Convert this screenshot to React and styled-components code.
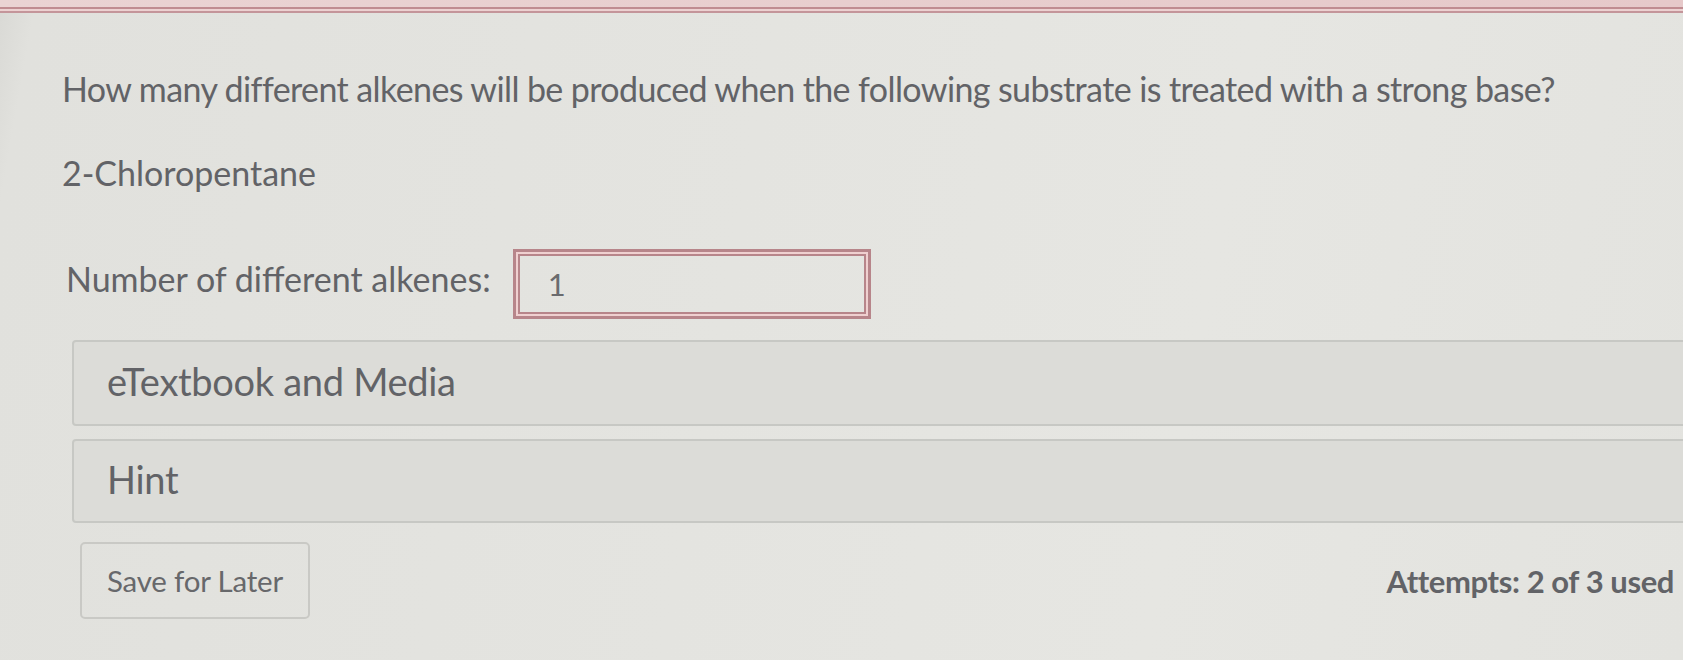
import React from 'react';
import styled, { createGlobalStyle } from 'styled-components';

const GlobalStyle = createGlobalStyle`
  html, body {
    margin: 0;
    padding: 0;
    overflow: hidden;
  }

  body {
    font-family: Lato, "Open Sans", sans-serif;
    background: #e2e2de;
  }
`;

const App = () => {
  return (
    <>
      <GlobalStyle />
      <Page>
        <TopBand />
        <Content>
          <Question>
            How many different alkenes will be produced when the following substrate is treated with a strong base?
          </Question>
          <Substrate>2-Chloropentane</Substrate>

          <AnswerRow>
            <Label>Number of different alkenes:</Label>
            <AnswerBox>
              <AnswerValue>1</AnswerValue>
            </AnswerBox>
          </AnswerRow>

          <Panel $top={21} $height={86}>
            <PanelTitle>eTextbook and Media</PanelTitle>
          </Panel>
          <Panel $top={13} $height={84}>
            <PanelTitle>Hint</PanelTitle>
          </Panel>

          <Footer>
            <SaveButton>Save for Later</SaveButton>
            <Attempts>Attempts: 2 of 3 used</Attempts>
          </Footer>
        </Content>
      </Page>
    </>
  );
};

const Page = styled.div`
  width: 1683px;
  height: 660px;
  background: linear-gradient(100deg, #d9d9d5 0%, #e1e1dd 2%, #e3e3df 30%, #e6e6e2 70%, #e3e3df 100%);
  overflow: hidden;
`;

const TopBand = styled.div`
  height: 7px;
  background: linear-gradient(90deg, #ead3d3, #e6c9ca);
  border-bottom: 2px solid #c08c91;
  box-shadow: 0 2px 0 #ecd1d1, 0 4px 0 #c4959a;
`;

const Content = styled.div`
  display: flex;
  flex-direction: column;
  padding: 62px 0 0 62px;
`;

const Question = styled.div`
  font-size: 34px;
  line-height: 36px;
  letter-spacing: -0.6px;
  color: #626367;
  white-space: nowrap;
`;

const Substrate = styled.div`
  margin-top: 48px;
  font-size: 34px;
  line-height: 36px;
  color: #626367;
`;

const AnswerRow = styled.div`
  display: flex;
  align-items: center;
  gap: 22px;
  margin-top: 58px;
  padding-left: 4px;
`;

const Label = styled.div`
  font-size: 34px;
  line-height: 36px;
  color: #626367;
  padding-bottom: 11px;
`;

const AnswerBox = styled.div`
  display: flex;
  align-items: center;
  width: 358px;
  height: 70px;
  padding-left: 32px;
  box-sizing: border-box;
  border: 3px solid #b7858a;
  box-shadow: inset 0 0 0 2px #efd0d0, inset 0 0 0 4px #b7858a;
`;

const AnswerValue = styled.span`
  font-size: 31px;
  color: #6a6b6e;
`;

const Panel = styled.div`
  display: flex;
  align-items: center;
  margin-top: ${(p) => p.$top}px;
  margin-left: 10px;
  margin-right: -20px;
  height: ${(p) => p.$height}px;
  padding-left: 33px;
  box-sizing: border-box;
  background: #dcdcd8;
  border: 2px solid #c7c8c4;
  border-radius: 4px;
`;

const PanelTitle = styled.div`
  font-size: 38px;
  letter-spacing: -0.3px;
  color: #626367;
  padding-bottom: 4px;
`;

const Footer = styled.div`
  display: flex;
  align-items: center;
  justify-content: space-between;
  margin-top: 19px;
  margin-left: 18px;
  padding-right: 9px;
`;

const SaveButton = styled.div`
  display: flex;
  align-items: center;
  justify-content: center;
  width: 230px;
  height: 77px;
  box-sizing: border-box;
  border: 2px solid #c9c9c5;
  border-radius: 5px;
  font-size: 29.5px;
  letter-spacing: -0.2px;
  color: #67686b;
`;

const Attempts = styled.div`
  font-size: 31px;
  font-weight: 700;
  letter-spacing: -0.4px;
  color: #626367;
`;

export default App;
